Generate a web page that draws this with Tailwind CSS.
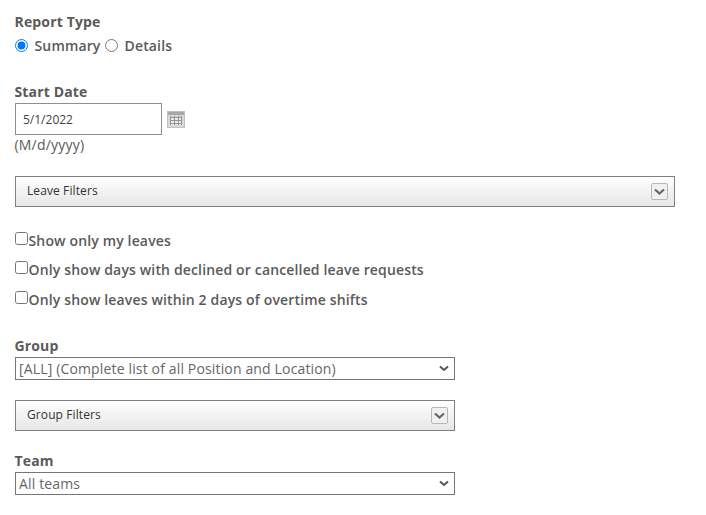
<!DOCTYPE html>
<html><head><meta charset="utf-8"><script src="https://cdn.jsdelivr.net/npm/@tailwindcss/browser@4"></script></head>
<body class="bg-white font-['Open_Sans',sans-serif] text-[14px] text-[#5a5a5a]">
<div class="w-[706px] h-[515px] overflow-hidden pl-[14.5px] pt-[12px]">
  <div class="font-bold leading-[19px] tracking-[0.15px]">Report Type</div>
  <div class="flex items-center h-[19px] mt-[5px] font-semibold tracking-[0.15px]">
    <input type="radio" name="r" checked class="m-0 w-[13px] h-[13px] mr-[7px]"><span>Summary</span>
    <input type="radio" name="r" class="m-0 w-[13px] h-[13px] ml-[4px] mr-[7px]"><span>Details</span>
  </div>
  <div class="font-bold leading-[19px] mt-[27px] tracking-[0.15px]">Start Date</div>
  <div class="flex items-center mt-[2px]">
    <input value="5/1/2022" class="w-[147.500px] h-[32px] border border-[#8f8f8f] pl-[7.500px] text-[12px] text-[#444] outline-none">
    <svg class="ml-[5px]" width="18" height="17" viewBox="0 0 18 17"><rect x="0.5" y="0.5" width="17" height="16" fill="#d8d8d8" stroke="#c0c0c0"/><rect x="1" y="1" width="16" height="3" fill="#a8a8a8"/><path d="M3 6h12v8H3z" fill="#ececec"/><path d="M3 6.500h12M3 9.500h12M3 12.500h12M3.500 5v9M7.500 5v9M11.500 5v9M14.500 5v9" stroke="#959595" fill="none"/></svg>
  </div>
  <div class="text-[14px] leading-[19px] font-normal tracking-[0.2px]">(M/d/yyyy)</div>
  <div class="flex items-center justify-between w-[660px] h-[31px] mt-[22px] border border-[#808080] bg-gradient-to-b from-white to-[#e6e6e6] pl-[11.500px] pr-[6px] text-[12px] text-[#333] tracking-[0.1px]">
    <span class="-mt-[2px]">Leave Filters</span>
    <span class="flex items-center justify-center w-[17px] h-[17px] border border-[#b8b8b8] rounded-[2px] bg-[#f0f0f0]"><svg width="11" height="7" viewBox="0 0 11 7"><path d="M1 1.500 5.500 5.500 10 1.500" fill="none" stroke="#666" stroke-width="2.200"/></svg></span>
  </div>
  <label class="flex items-start h-[19px] mt-[24px] font-semibold tracking-[0.15px] leading-[19px]"><input type="checkbox" class="m-0 w-[13px] h-[13px] mt-px"><span class="ml-px">Show only my leaves</span></label>
  <label class="flex items-start h-[19px] mt-[10px] font-semibold tracking-[0.15px] leading-[19px]"><input type="checkbox" class="m-0 w-[13px] h-[13px] mt-px"><span class="ml-px">Only show days with declined or cancelled leave requests</span></label>
  <label class="flex items-start h-[19px] mt-[11px] font-semibold tracking-[0.15px] leading-[19px]"><input type="checkbox" class="m-0 w-[13px] h-[13px] mt-px"><span class="ml-px">Only show leaves within 2 days of overtime shifts</span></label>
  <div class="font-bold leading-[19px] mt-[27px] tracking-[0.15px]">Group</div>
  <div class="relative w-[440px] h-[23px] mt-[2px]">
    <select class="block w-full h-full border border-[#767676] bg-white pl-[3.500px] text-[14px] text-[#666] tracking-[0.15px] appearance-none outline-none"><option>[ALL] (Complete list of all Position and Location)</option></select>
    <svg class="absolute right-[6px] top-[8px]" width="10" height="7" viewBox="0 0 10 7"><path d="M1 1.500 5 5 9 1.500" fill="none" stroke="#555" stroke-width="2"/></svg>
  </div>
  <div class="flex items-center justify-between w-[440px] h-[31px] mt-[20px] border border-[#808080] bg-gradient-to-b from-white to-[#e6e6e6] pl-[11.500px] pr-[6px] text-[12px] text-[#333] tracking-[0.1px]">
    <span class="-mt-[2px]">Group Filters</span>
    <span class="flex items-center justify-center w-[17px] h-[17px] border border-[#b8b8b8] rounded-[2px] bg-[#f0f0f0]"><svg width="11" height="7" viewBox="0 0 11 7"><path d="M1 1.500 5.500 5.500 10 1.500" fill="none" stroke="#666" stroke-width="2.200"/></svg></span>
  </div>
  <div class="font-bold leading-[19px] mt-[20px] tracking-[0.15px]">Team</div>
  <div class="relative w-[440px] h-[23px] mt-[2px]">
    <select class="block w-full h-full border border-[#767676] bg-white pl-[3.500px] text-[14px] text-[#666] tracking-[0.15px] appearance-none outline-none"><option>All teams</option></select>
    <svg class="absolute right-[6px] top-[8px]" width="10" height="7" viewBox="0 0 10 7"><path d="M1 1.500 5 5 9 1.500" fill="none" stroke="#555" stroke-width="2"/></svg>
  </div>
</div>
</body></html>
